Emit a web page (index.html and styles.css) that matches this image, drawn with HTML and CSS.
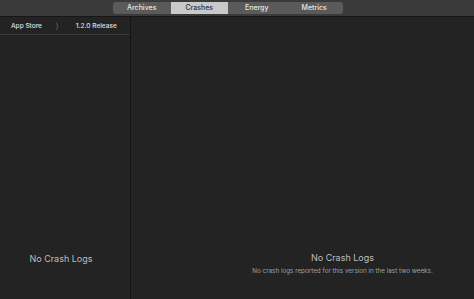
FILE: index.html
```html
<!DOCTYPE html>
<html lang="en">
<head>
    <meta charset="UTF-8">
    <title>Organizer - Crashes</title>
    <link rel="stylesheet" href="styles.css">
</head>
<body>
<div class="toolbar">
    <div class="segmented">
        <div class="segment">Archives</div>
        <div class="segment active">Crashes</div>
        <div class="segment">Energy</div>
        <div class="segment">Metrics</div>
    </div>
</div>
<div class="main">
    <div class="sidebar">
        <div class="breadcrumb">
            <span class="crumb">App Store</span>
            <span class="chevron">&#x3009;</span>
            <span class="crumb">1.2.0 Release</span>
        </div>
        <div class="empty side-empty">
            <div class="empty-title">No Crash Logs</div>
        </div>
    </div>
    <div class="content">
        <div class="empty content-empty">
            <div class="empty-title">No Crash Logs</div>
            <div class="empty-sub">No crash logs reported for this version in the last two weeks.</div>
        </div>
    </div>
</div>
</body>
</html>
```

FILE: styles.css
```css
html, body {
    margin: 0;
    height: 100%;
}
body {
    background-color: #232323;
    font-family: "Inter", "Liberation Sans", sans-serif;
    color: #c8c8c8;
    display: flex;
    flex-direction: column;
    overflow: hidden;
}
.toolbar {
    background-color: #3a3a3a;
    border-bottom: 1px solid #171717;
    display: flex;
    justify-content: flex-start;
    padding-left: 113px;
    padding-top: 2px;
    box-sizing: border-box;
    height: 17px;
}
.segmented {
    display: flex;
    height: 12px;
    width: 230px;
    background-color: #5a5a5a;
    border-radius: 3px;
    overflow: hidden;
}
.segment {
    flex: 1;
    font-size: 7px;
    font-weight: 500;
    line-height: 12px;
    text-align: center;
    color: #e6e6e6;
}
.active {
    background-color: #c9c9c9;
    color: #333;
}
.main {
    flex: 1;
    display: flex;
}
.sidebar {
    width: 130px;
    border-right: 1px solid #141414;
    display: flex;
    flex-direction: column;
}
.breadcrumb {
    height: 18px;
    border-bottom: 1px solid #393939;
    display: flex;
    align-items: center;
    padding-left: 11px;
    padding-top: 1px;
    box-sizing: border-box;
    font-size: 6.5px;
    font-weight: 500;
    color: #e0e0e0;
}
.chevron {
    margin-left: 13px;
    margin-right: 13px;
    font-size: 8px;
    color: #bbb;
}
.content {
    flex: 1;
    display: flex;
    flex-direction: column;
}
.empty {
    flex: 1;
    display: flex;
    flex-direction: column;
    align-items: center;
    justify-content: flex-end;
}
.side-empty {
    padding-right: 8px;
    padding-bottom: 35px;
}
.content-empty {
    padding-left: 80px;
    padding-bottom: 24px;
}
.empty-title {
    font-size: 9px;
    color: #bdbdbd;
}
.empty-sub {
    margin-top: 4px;
    font-size: 6.3px;
    color: #a0a0a0;
}
```
